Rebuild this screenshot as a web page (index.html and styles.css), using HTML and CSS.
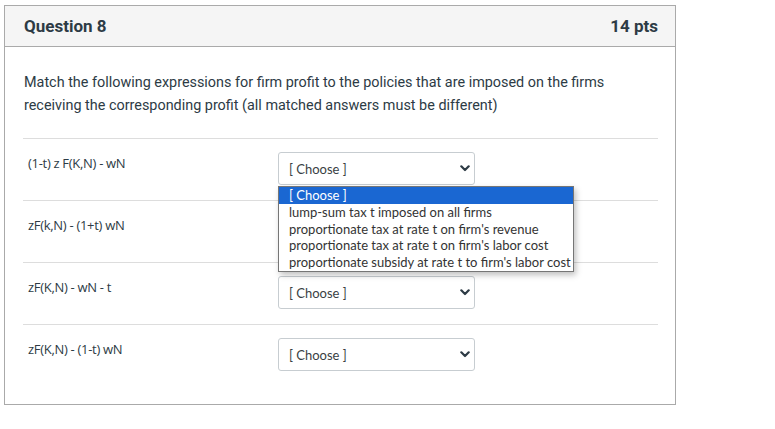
FILE: index.html
```html
<!DOCTYPE html>
<html lang="en">
<head>
<meta charset="utf-8">
<title>Question 8</title>
<link rel="stylesheet" href="styles.css">
</head>
<body>
<div class="question">
  <div class="q-header">
    <span class="q-title">Question 8</span>
    <span class="q-points">14 pts</span>
  </div>
  <div class="q-body">
    <p class="q-text">Match the following expressions for firm profit to the policies that are imposed on the firms receiving the corresponding profit (all matched answers must be different)</p>
    <div class="answers">
      <div class="answer-row">
        <div class="answer-label">(1-t) z F(K,N) - wN</div>
        <div class="select-wrap">
          <select class="choose"><option>[ Choose ]</option></select>
          <svg class="chev" width="10" height="7" viewBox="0 0 10 7"><polyline points="1.3,1.3 5,5 8.7,1.3" fill="none" stroke="#2d3b45" stroke-width="2.2" stroke-linecap="round" stroke-linejoin="round"/></svg>
          <ul class="dropdown">
            <li class="opt selected">[ Choose ]</li>
            <li class="opt">lump-sum tax t imposed on all firms</li>
            <li class="opt">proportionate tax at rate t on firm's revenue</li>
            <li class="opt">proportionate tax at rate t on firm's labor cost</li>
            <li class="opt">proportionate subsidy at rate t to firm's labor cost</li>
          </ul>
        </div>
      </div>
      <div class="answer-row">
        <div class="answer-label">zF(k,N) - (1+t) wN</div>
        <div class="select-wrap">
          <select class="choose"><option>[ Choose ]</option></select>
          <svg class="chev" width="10" height="7" viewBox="0 0 10 7"><polyline points="1.3,1.3 5,5 8.7,1.3" fill="none" stroke="#2d3b45" stroke-width="2.2" stroke-linecap="round" stroke-linejoin="round"/></svg>
        </div>
      </div>
      <div class="answer-row">
        <div class="answer-label">zF(K,N) - wN - t</div>
        <div class="select-wrap">
          <select class="choose"><option>[ Choose ]</option></select>
          <svg class="chev" width="10" height="7" viewBox="0 0 10 7"><polyline points="1.3,1.3 5,5 8.7,1.3" fill="none" stroke="#2d3b45" stroke-width="2.2" stroke-linecap="round" stroke-linejoin="round"/></svg>
        </div>
      </div>
      <div class="answer-row">
        <div class="answer-label">zF(K,N) - (1-t) wN</div>
        <div class="select-wrap">
          <select class="choose"><option>[ Choose ]</option></select>
          <svg class="chev" width="10" height="7" viewBox="0 0 10 7"><polyline points="1.3,1.3 5,5 8.7,1.3" fill="none" stroke="#2d3b45" stroke-width="2.2" stroke-linecap="round" stroke-linejoin="round"/></svg>
        </div>
      </div>
    </div>
  </div>
</div>
</body>
</html>
```
FILE: styles.css
```css
html, body {
  margin: 0;
  padding: 0;
  background: #ffffff;
}

body {
  font-family: Roboto, "Liberation Sans", sans-serif;
  color: #2d3b45;
}

.question {
  box-sizing: border-box;
  width: 672px;
  height: 400px;
  margin: 5px 0 0 4px;
  border: 1px solid #aaaaaa;
  background: #ffffff;
}

.q-header {
  height: 40px;
  display: flex;
  align-items: center;
  justify-content: space-between;
  padding: 0 17px 0 19px;
  background: #f5f5f5;
  border-bottom: 1px solid #aaaaaa;
  font-weight: bold;
  font-size: 17px;
  color: #2d3b45;
}

.q-body {
  padding: 24px 17px 0 18px;
}

.q-text {
  margin: 0 0 21px 0;
  padding-left: 1px;
  font-size: 14.4px;
  line-height: 23px;
}

.answers {
  display: flex;
  flex-direction: column;
}

.answer-row {
  display: flex;
  align-items: flex-start;
  border-top: 1px solid #dddddd;
  padding: 13px 0 15px 0;
}

.answer-label {
  box-sizing: border-box;
  width: 255px;
  padding: 3px 0 0 5px;
  font-family: "Open Sans", sans-serif;
  font-size: 13px;
  line-height: 17px;
  letter-spacing: -0.3px;
  color: #2d3b45;
}

.select-wrap {
  position: relative;
  width: 197px;
  height: 33px;
}

.choose {
  appearance: none;
  -webkit-appearance: none;
  box-sizing: border-box;
  width: 197px;
  height: 33px;
  margin: 0;
  padding: 0 24px 0 10px;
  border: 1px solid #c7cdd1;
  border-radius: 3px;
  background: #ffffff;
  font-family: Lato, sans-serif;
  font-size: 13px;
  color: #3a3f44;
}

.chev {
  position: absolute;
  right: 5px;
  top: 13px;
  pointer-events: none;
}

.dropdown {
  position: absolute;
  left: 0;
  top: 34px;
  z-index: 5;
  box-sizing: border-box;
  width: 296px;
  margin: 0;
  padding: 0;
  list-style: none;
  background: #ffffff;
  border: 1px solid #767676;
  box-shadow: 2px 3px 6px rgba(0, 0, 0, 0.25);
}

.opt {
  height: 16.8px;
  line-height: 16.8px;
  padding-left: 10px;
  font-family: Lato, sans-serif;
  font-size: 13px;
  color: #333333;
  white-space: nowrap;
}

.opt.selected {
  background: #1a67d2;
  color: #ffffff;
}
```
